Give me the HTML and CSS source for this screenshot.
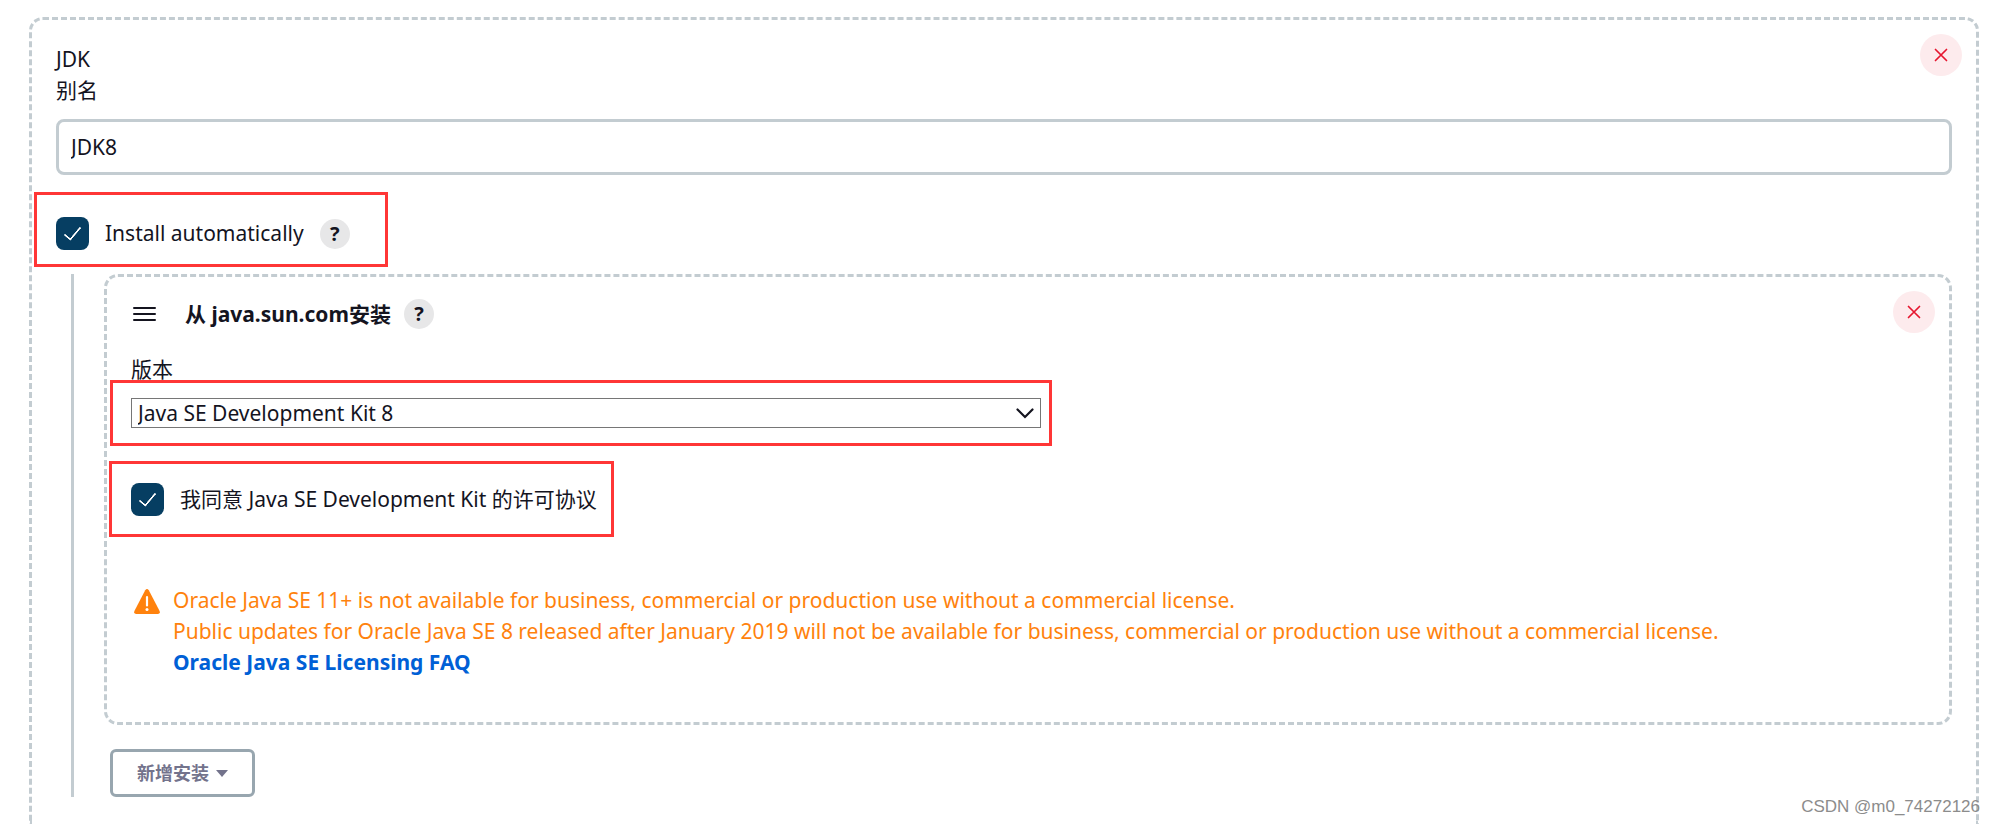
FILE: index.html
```html
<!DOCTYPE html>
<html lang="zh-CN">
<head>
<meta charset="utf-8">
<title>JDK</title>
<link rel="stylesheet" href="styles.css">
</head>
<body>
<main class="chunk tool">
  <button class="remove" type="button" aria-label="删除 JDK">
    <svg width="14" height="14" viewBox="0 0 14 14"><path d="M1.500 1.500 12.500 12.500M12.500 1.500 1.500 12.500"/></svg>
  </button>
  <div class="text-line">JDK</div>
  <label class="text-line" for="alias">别名</label>
  <input class="text-input" id="alias" type="text" value="JDK8">

  <div class="check-row install-row">
    <input class="checkbox" type="checkbox" id="auto" checked>
    <label for="auto">Install automatically</label>
    <button class="help" type="button" aria-label="帮助">?</button>
    <span class="mark mark-install"></span>
  </div>

  <div class="nested">
    <section class="chunk installer">
      <button class="remove" type="button" aria-label="删除安装">
        <svg width="14" height="14" viewBox="0 0 14 14"><path d="M1.500 1.500 12.500 12.500M12.500 1.500 1.500 12.500"/></svg>
      </button>
      <header class="installer-head">
        <svg class="handle" width="25" height="14" viewBox="0 0 25 14"><path d="M3 1h21M3 7h21M3 13h21"/></svg>
        <strong>从 java.sun.com安装</strong>
        <button class="help" type="button" aria-label="帮助">?</button>
      </header>

      <label class="text-line version-label" for="version">版本</label>
      <div class="select-wrap">
        <select class="select" id="version"><option>Java SE Development Kit 8</option></select>
        <svg class="chevron" width="18" height="11" viewBox="0 0 18 11"><path d="M1.500 1.500 9 9 16.500 1.500"/></svg>
        <span class="mark mark-select"></span>
      </div>

      <div class="check-row license-row">
        <input class="checkbox" type="checkbox" id="license" checked>
        <label for="license">我同意 Java SE Development Kit 的许可协议</label>
        <span class="mark mark-license"></span>
      </div>

      <div class="warning">
        <svg class="warning-icon" width="26" height="25" viewBox="0 0 26 25"><path d="M11.200 1.300Q13-1.200 14.800 1.300L25.600 22Q26.500 25 23.800 25H2.200Q-.5 25 .4 22Z" fill="#ff820d"/><path d="M13 8v8.500" stroke="#fff" stroke-width="2.200" stroke-linecap="round"/><circle cx="13" cy="20.500" r="1.500" fill="#fff"/></svg>
        <div>
          Oracle Java SE 11+ is not available for business, commercial or production use without a commercial license.<br>
          Public updates for Oracle Java SE 8 released after January 2019 will not be available for business, commercial or production use without a commercial license.<br>
          <a href="#faq">Oracle Java SE Licensing FAQ</a>
        </div>
      </div>
    </section>
    <button class="add" type="button">新增安装
      <svg width="12" height="7" viewBox="0 0 12 7"><path d="M0 0h12L6 7Z" fill="#73738c"/></svg>
    </button>
  </div>
</main>
<div class="watermark">CSDN @m0_74272126</div>
</body>
</html>
```
FILE: styles.css
```css
* { box-sizing: border-box; }

body {
  position: relative;
  display: flex;
  flex-direction: column;
  min-height: 100vh;
  margin: 0;
  padding: 17px 16px 0 29px;
  background: #fff;
  color: #14141f;
  font: 21px/31px "Noto Sans", "Noto Sans CJK SC", sans-serif;
}

button, input, select { font: inherit; color: inherit; margin: 0; }

.chunk {
  position: relative;
  border: 3px dashed #c3ccd1;
  border-radius: 14px;
}

.tool {
  flex: 1;
  padding: 24px 24px 27px;
  border-bottom: 0;
  border-radius: 14px 14px 0 0;
}

.text-line { display: block; }

.remove {
  position: absolute;
  top: 14px;
  right: 14px;
  display: grid;
  place-items: center;
  width: 42px;
  height: 42px;
  padding: 0;
  border: 0;
  border-radius: 50%;
  background: #fdebed;
}

.remove path { fill: none; stroke: #e6162f; stroke-width: 1.7; stroke-linecap: round; }

.text-input {
  display: block;
  width: 100%;
  height: 56px;
  margin-top: 13px;
  padding: 0 12px;
  border: 3px solid #c3ccd1;
  border-radius: 8px;
  background: #fff;
}

.check-row {
  position: relative;
  display: flex;
  align-items: center;
  gap: 16px;
}

.install-row { margin-top: 42px; }

.checkbox {
  appearance: none;
  display: grid;
  place-items: center;
  width: 33px;
  height: 33px;
  border-radius: 8px;
  background: #063e62;
}

.checkbox:checked::before {
  content: "";
  width: 15px;
  height: 7px;
  margin-bottom: 4px;
  border: solid #fff;
  border-width: 0 0 2px 2px;
  border-radius: 1px;
  transform: rotate(-50deg);
}

.help {
  width: 30px;
  height: 30px;
  padding: 0;
  border: 0;
  border-radius: 50%;
  background: #e7e7e8;
  font-size: 20px;
  font-weight: 700;
  line-height: 30px;
}

.nested {
  position: relative;
  margin: 24px 0 0 15px;
  padding-left: 30px;
  border-left: 3px solid #c3ccd1;
}

.installer { padding: 21px 24px 44px; }

.installer-head {
  display: flex;
  align-items: center;
  height: 32px;
}

.handle { margin-right: 29px; }
.handle path { fill: none; stroke: #14141f; stroke-width: 2; stroke-linecap: round; }
.installer-head .help { margin-left: 13px; }
.version-label { margin-top: 24px; }

.select-wrap {
  position: relative;
  width: calc(50% + 13px);
  margin-top: 13px;
}

.select {
  appearance: none;
  display: block;
  width: 100%;
  height: 30px;
  padding: 0 32px 0 6px;
  border: 1px solid #767676;
  border-radius: 0;
  background: #fff;
  line-height: 28px;
}

.chevron {
  position: absolute;
  top: 10px;
  right: 7px;
  pointer-events: none;
}

.chevron path { fill: none; stroke: #14141f; stroke-width: 2.2; stroke-linecap: round; }

.license-row { margin-top: 55px; }

.warning {
  display: flex;
  gap: 13px;
  margin-top: 69px;
  padding-left: 3px;
  color: #ff820d;
}

.warning-icon { flex: none; margin-top: 4px; }
.warning a { color: #0060d6; font-weight: 700; text-decoration: none; }

.add {
  display: flex;
  align-items: center;
  gap: 7px;
  height: 48px;
  margin: 24px 0 0 6px;
  padding: 0 24px;
  border: 3px solid #98a6af;
  border-radius: 6px;
  background: #fff;
  color: #73738c;
  font-size: 18px;
  font-weight: 700;
}

/* Highlight frames laid over the form */
.mark {
  position: absolute;
  border: 3px solid #ff3636;
  pointer-events: none;
}

.mark-install { top: -25px; left: -22px; width: 354px; height: 75px; }
.mark-select { inset: -18px -11px -18px -21px; }
.mark-license { top: -22px; left: -22px; width: 505px; height: 76px; }

.watermark {
  position: absolute;
  right: 15px;
  bottom: 6px;
  color: #8c8c8c;
  font: 17px/22px "Liberation Sans", Arial, sans-serif;
}
```
